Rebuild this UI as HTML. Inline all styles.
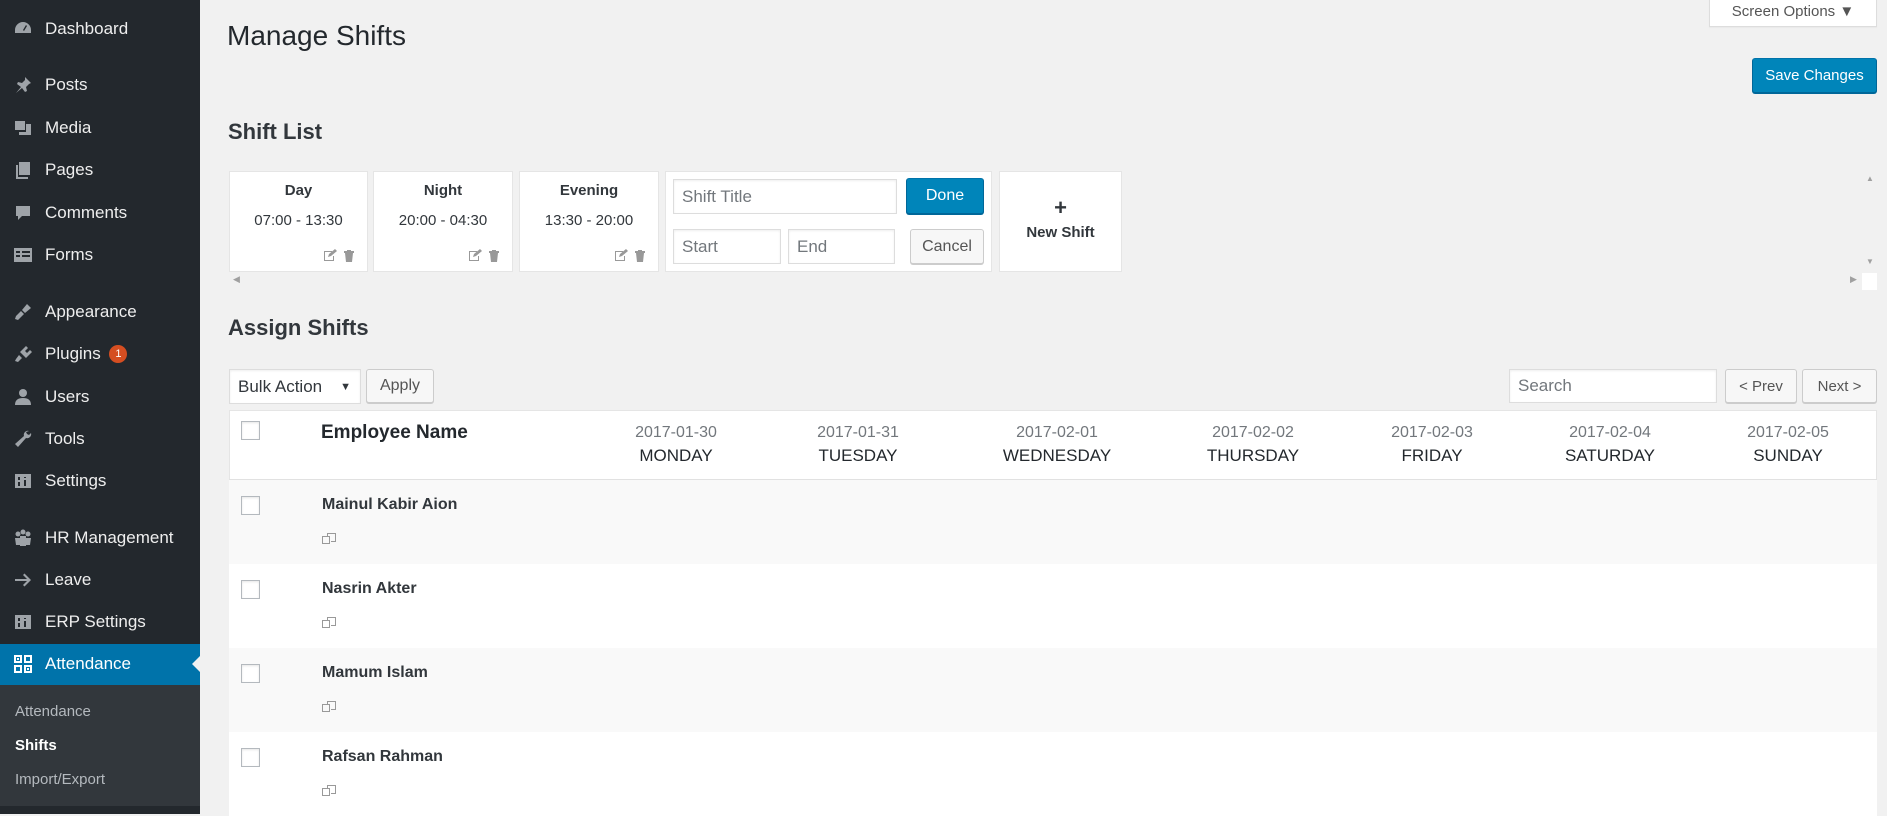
<!DOCTYPE html>
<html><head><meta charset="utf-8"><style>
*{box-sizing:border-box;margin:0;padding:0}
body{width:1887px;height:814px;overflow:hidden;background:#f1f1f1;font-family:"Liberation Sans",sans-serif;color:#23282d;position:relative}
.a{position:absolute}
#side{left:0;top:0;width:200px;height:814px;background:#23282d}
.mi{position:absolute;left:0;width:200px;color:#eee;font-size:17px;line-height:20px}
.mi svg{position:absolute;left:12px;top:0;width:22px;height:20px;fill:#9ea3a8}
.mi .t{position:absolute;left:45px;top:0;white-space:nowrap}
.sub{position:absolute;left:15px;font-size:15px;color:#b4b9be}
.card{background:#fff;border:1px solid #e5e5e5;position:absolute}
.inp{position:absolute;background:#fff;border:1px solid #ddd;box-shadow:inset 0 1px 2px rgba(0,0,0,.07);color:#72777c;font-size:17px;padding-left:8px;display:flex;align-items:center}
.btn{position:absolute;background:#f7f7f7;border:1px solid #ccc;border-radius:3px;box-shadow:0 1px 0 #ccc;color:#555;font-size:16px;display:flex;align-items:center;justify-content:center}
.bp{background:#0085ba;border-color:#0073aa #006799 #006799;color:#fff;box-shadow:0 1px 0 #006799}
.cb{position:absolute;width:19px;height:19px;border:1px solid #b4b9be;background:#fff;box-shadow:inset 0 1px 2px rgba(0,0,0,.1)}
.dh{position:absolute;width:180px;text-align:center}
.dh .d{font-size:16px;color:#72777c}
.dh .w{font-size:17px;color:#23282d;margin-top:4px}
.row{position:absolute;left:229px;width:1648px;height:84px}
.nm{position:absolute;left:93px;top:16px;font-size:16px;font-weight:bold;color:#32373c}
.cp{position:absolute;left:93px;top:53px;width:16px;height:14px}
.ed{position:absolute;right:10px;bottom:8px;width:34px;height:14px}
</style></head><body>
<div id="side" class="a"></div>
<div class="mi" style="top:19px"><svg viewBox="0 0 20 20"><path d="M10 3a8 8 0 0 0-8 8v3h16v-3a8 8 0 0 0-8-8zm0 8l3-5 1 1-3 5z"/></svg><span class="t">Dashboard</span></div>
<div class="mi" style="top:75px"><svg viewBox="0 0 20 20"><path d="M12 2l6 6-2 1-3 3 1 4-2 1-3-4-6 5 5-6-4-3 1-2 4 1 3-3z"/></svg><span class="t">Posts</span></div>
<div class="mi" style="top:118px"><svg viewBox="0 0 20 20"><path d="M2 3h10v9H2zM13 6h5v11H6v-3h7z"/></svg><span class="t">Media</span></div>
<div class="mi" style="top:160px"><svg viewBox="0 0 20 20"><path d="M6 2h11v13H6zM3 5h2v12h10v2H3z"/></svg><span class="t">Pages</span></div>
<div class="mi" style="top:203px"><svg viewBox="0 0 20 20"><path d="M3 3h14v10H9l-4 4v-4H3z"/></svg><span class="t">Comments</span></div>
<div class="mi" style="top:245px"><svg viewBox="0 0 20 20"><path d="M1 3h18v14H1zm2 3v2h4V6zm6 0v2h8V6zm-6 4v2h4v-2zm6 0v2h8v-2z"/></svg><span class="t">Forms</span></div>
<div class="mi" style="top:302px"><svg viewBox="0 0 20 20"><path d="M14 2l4 4-6 5-3-3zM8 9l3 3-6 6-3-1 1-3z"/></svg><span class="t">Appearance</span></div>
<div class="mi" style="top:344px"><svg viewBox="0 0 20 20"><path d="M13 2l2 2-3 3 2 2 3-3 2 2-4 4-2 2-6-6zM6 11l3 3-4 4-3-1 1-2z"/></svg><span class="t">Plugins <span style="display:inline-block;width:18px;height:18px;border-radius:9px;background:#d54e21;color:#fff;font-size:11px;line-height:18px;text-align:center;vertical-align:2px;margin-left:4px">1</span></span></div>
<div class="mi" style="top:387px"><svg viewBox="0 0 20 20"><circle cx="10" cy="6" r="4"/><path d="M2 18c0-5 3-7 8-7s8 2 8 7z"/></svg><span class="t">Users</span></div>
<div class="mi" style="top:429px"><svg viewBox="0 0 20 20"><path d="M16 2a4 4 0 0 0-5 5L2 15l3 3 8-9a4 4 0 0 0 5-5l-2 2-2-1-1-2z"/></svg><span class="t">Tools</span></div>
<div class="mi" style="top:471px"><svg viewBox="0 0 20 20"><path d="M2 3h16v14H2zm3 3v9h2V6zm6 0v9h2V6zM4 9h4v2H4zm6-2h4v2h-4z"/></svg><span class="t">Settings</span></div>
<div class="mi" style="top:528px"><svg viewBox="0 0 20 20"><circle cx="5" cy="6" r="2.5"/><circle cx="10" cy="4" r="2.5"/><circle cx="15" cy="6" r="2.5"/><path d="M2 10h6v7H3zM7 8h6v10H7zm5 2h6l-1 7h-5z"/></svg><span class="t">HR Management</span></div>
<div class="mi" style="top:570px"><svg viewBox="0 0 20 20"><path d="M2 9h12l-4-4 1.5-1.5L18 10l-6.5 6.5L10 15l4-4H2z"/></svg><span class="t">Leave</span></div>
<div class="mi" style="top:612px"><svg viewBox="0 0 20 20"><path d="M2 3h16v14H2zm3 3v9h2V6zm6 0v9h2V6zM4 9h4v2H4zm6-2h4v2h-4z"/></svg><span class="t">ERP Settings</span></div>
<div class="a" style="left:0;top:644px;width:200px;height:41px;background:#0073aa"></div>
<div class="a" style="left:192px;top:656px;width:0;height:0;border-top:8px solid transparent;border-bottom:8px solid transparent;border-right:8px solid #f1f1f1"></div>
<div class="mi" style="top:654px;color:#fff"><svg viewBox="0 0 20 20" style="fill:#fff"><path d="M1 1h8v8H1zm2 2v4h4V3zM11 1h8v8h-8zm2 2v4h4V3zM1 11h8v8H1zm2 2v4h4v-4zM11 11h8v8h-8zm2 2v4h4v-4z"/><path d="M4 4h2v2H4zM14 14h2v2h-2z"/></svg><span class="t">Attendance</span></div>
<div class="a" style="left:0;top:685px;width:200px;height:121px;background:#32373c"></div>
<div class="sub" style="top:703px">Attendance</div>
<div class="sub" style="top:737px;color:#fff;font-weight:bold">Shifts</div>
<div class="sub" style="top:771px">Import/Export</div>

<div class="a" style="left:227px;top:20px;font-size:28px;color:#23282d">Manage Shifts</div>
<div class="a" style="left:1709px;top:-1px;width:168px;height:28px;background:#fff;border:1px solid #ddd;box-shadow:0 1px 1px rgba(0,0,0,.04);color:#555;font-size:15px;text-align:center;line-height:24px">Screen Options ▼</div>
<div class="btn bp" style="left:1752px;top:58px;width:125px;height:35px;font-size:15px">Save Changes</div>

<div class="a" style="left:228px;top:119px;font-size:22px;font-weight:bold;color:#32373c">Shift List</div>

<svg width="0" height="0" style="position:absolute"><defs>
<g id="ed"><path d="M1 2h8v1H2v8h8V7h1v5H1z" fill="#999"/><path d="M5 8l1-3 6-5 2 2-6 5z" fill="#999"/><path d="M21 2h10v2H21zM24 1h4v1h-4zM22 4h8l-1 9h-6z" fill="#999"/></g>
<g id="cp"><path d="M0 3h8v8H0zm1 1v6h6V4z" fill="#999"/><path d="M5 0h9v9h-5V8h4V1H6v2H5z" fill="#999"/></g>
</defs></svg>

<div class="card" style="left:229px;top:171px;width:139px;height:101px;text-align:center">
<div style="margin-top:10px;font-size:15px;font-weight:bold;color:#32373c">Day</div><div style="margin-top:13px;font-size:15px;color:#32373c">07:00 - 13:30</div>
<svg class="ed" viewBox="0 0 34 14"><use href="#ed"/></svg></div>
<div class="card" style="left:373px;top:171px;width:140px;height:101px;text-align:center">
<div style="margin-top:10px;font-size:15px;font-weight:bold;color:#32373c">Night</div><div style="margin-top:13px;font-size:15px;color:#32373c">20:00 - 04:30</div>
<svg class="ed" viewBox="0 0 34 14"><use href="#ed"/></svg></div>
<div class="card" style="left:519px;top:171px;width:140px;height:101px;text-align:center">
<div style="margin-top:10px;font-size:15px;font-weight:bold;color:#32373c">Evening</div><div style="margin-top:13px;font-size:15px;color:#32373c">13:30 - 20:00</div>
<svg class="ed" viewBox="0 0 34 14"><use href="#ed"/></svg></div>
<div class="card" style="left:665px;top:171px;width:327px;height:101px"></div>
<div class="inp" style="left:673px;top:179px;width:224px;height:35px">Shift Title</div>
<div class="btn bp" style="left:906px;top:178px;width:78px;height:36px">Done</div>
<div class="inp" style="left:673px;top:229px;width:108px;height:35px">Start</div>
<div class="inp" style="left:788px;top:229px;width:107px;height:35px">End</div>
<div class="btn" style="left:910px;top:229px;width:74px;height:35px">Cancel</div>
<div class="card" style="left:999px;top:171px;width:123px;height:101px;text-align:center">
<div style="margin-top:26px;font-size:22px;font-weight:bold;color:#32373c;line-height:20px">+</div><div style="margin-top:6px;font-size:15px;font-weight:bold;color:#32373c">New Shift</div></div>
<div class="a" style="left:233px;top:274px;font-size:9px;color:#a0a0a0">◀</div>
<div class="a" style="left:1850px;top:274px;font-size:9px;color:#a0a0a0">▶</div>
<div class="a" style="left:1866px;top:174px;font-size:8px;color:#a0a0a0">▲</div>
<div class="a" style="left:1866px;top:257px;font-size:8px;color:#a0a0a0">▼</div>
<div class="a" style="left:1862px;top:273px;width:15px;height:17px;background:#fff"></div>

<div class="a" style="left:228px;top:315px;font-size:22px;font-weight:bold;color:#32373c">Assign Shifts</div>
<div class="inp" style="left:229px;top:369px;width:132px;height:35px;color:#32373c;font-size:17px">Bulk Action<span style="position:absolute;right:9px;font-size:11px">▼</span></div>
<div class="btn" style="left:366px;top:369px;width:68px;height:34px;font-size:16px">Apply</div>
<div class="inp" style="left:1509px;top:369px;width:208px;height:34px">Search</div>
<div class="btn" style="left:1725px;top:369px;width:72px;height:34px;font-size:15px">&lt; Prev</div>
<div class="btn" style="left:1802px;top:369px;width:75px;height:34px;font-size:15px">Next &gt;</div>

<div class="a" style="left:229px;top:410px;width:1648px;height:404px;background:#fff;border:1px solid #e5e5e5"></div>
<div class="row" style="top:410px;height:70px;border-bottom:1px solid #e1e1e1"></div>
<div class="cb" style="left:241px;top:421px"></div>
<div class="a" style="left:321px;top:422px;font-size:19px;font-weight:bold;color:#23282d">Employee Name</div>
<div class="dh" style="left:586px;top:424px"><div class="d">2017-01-30</div><div class="w">MONDAY</div></div>
<div class="dh" style="left:768px;top:424px"><div class="d">2017-01-31</div><div class="w">TUESDAY</div></div>
<div class="dh" style="left:967px;top:424px"><div class="d">2017-02-01</div><div class="w">WEDNESDAY</div></div>
<div class="dh" style="left:1163px;top:424px"><div class="d">2017-02-02</div><div class="w">THURSDAY</div></div>
<div class="dh" style="left:1342px;top:424px"><div class="d">2017-02-03</div><div class="w">FRIDAY</div></div>
<div class="dh" style="left:1520px;top:424px"><div class="d">2017-02-04</div><div class="w">SATURDAY</div></div>
<div class="dh" style="left:1698px;top:424px"><div class="d">2017-02-05</div><div class="w">SUNDAY</div></div>

<div class="row" style="top:480px;background:#f9f9f9"><div class="cb" style="left:12px;top:16px"></div><div class="nm">Mainul Kabir Aion</div><svg class="cp" viewBox="0 0 16 14"><use href="#cp"/></svg></div>
<div class="row" style="top:564px;background:#fff"><div class="cb" style="left:12px;top:16px"></div><div class="nm">Nasrin Akter</div><svg class="cp" viewBox="0 0 16 14"><use href="#cp"/></svg></div>
<div class="row" style="top:648px;background:#f9f9f9"><div class="cb" style="left:12px;top:16px"></div><div class="nm">Mamum Islam</div><svg class="cp" viewBox="0 0 16 14"><use href="#cp"/></svg></div>
<div class="row" style="top:732px;background:#fff"><div class="cb" style="left:12px;top:16px"></div><div class="nm">Rafsan Rahman</div><svg class="cp" viewBox="0 0 16 14"><use href="#cp"/></svg></div>
</body></html>
